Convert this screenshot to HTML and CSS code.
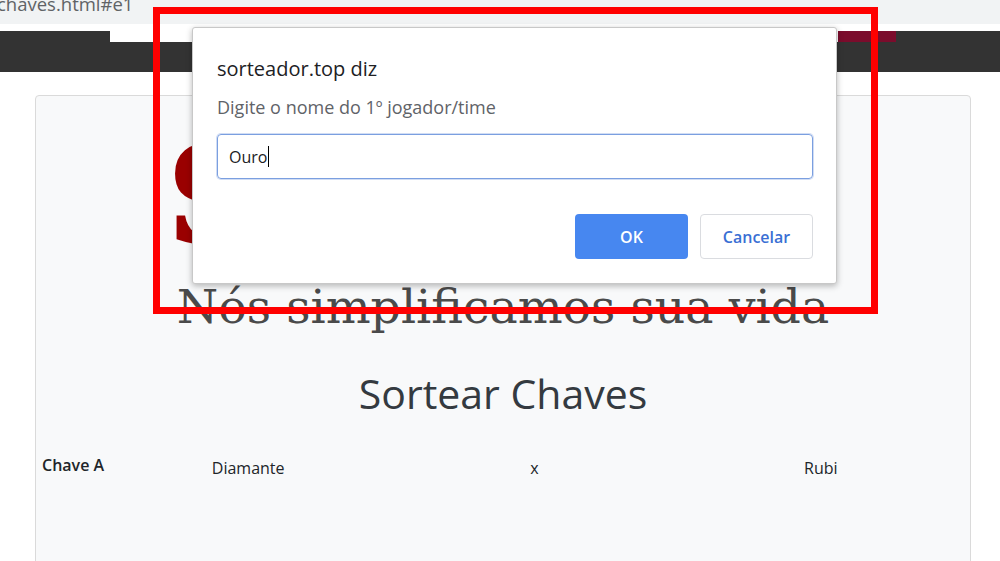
FILE: index.html
```html
<!DOCTYPE html>
<html>
<head>
<meta name="viewport" content="width=device-width, initial-scale=1">
<link rel="stylesheet" href="styles.css">
</head>
<body>

<div class="chrome">
  <span class="url">chaves.html#e1</span>
</div>

<div class="navbar">
  <div class="nav-brand"></div>
  <div class="nav-tab"></div>
  <div class="nav-tab active"></div>
</div>

<div class="card">
  <h1 class="logo">Sorteio</h1>
  <p class="tagline">Nós simplificamos sua vida</p>
  <h2 class="title">Sortear Chaves</h2>

  <div class="keys">
    <div class="key-name">Chave A</div>
    <div class="key-cell">Diamante</div>
    <div class="key-cell">x</div>
    <div class="key-cell">Rubi</div>
  </div>
</div>

<!-- window.prompt() -->
<div class="dialog">
  <div class="dialog-title">sorteador.top diz</div>
  <div class="dialog-msg">Digite o nome do 1º jogador/time</div>
  <div class="dialog-input">Ouro<span class="caret"></span></div>
  <div class="dialog-buttons">
    <button class="btn btn-ok">OK</button>
    <button class="btn btn-cancel">Cancelar</button>
  </div>
</div>

<div class="highlight"></div>

</body>
</html>
```

FILE: styles.css
```css
* {
  box-sizing: border-box;
}

body {
  margin: 0;
  background: #fff;
  font-family: "Open Sans", "Noto Sans", sans-serif;
  color: #212529;
  overflow: hidden;
}

.chrome {
  height: 24px;
  background: #f1f3f4;
  overflow: hidden;
  margin-bottom: 7px;
}

.url {
  display: block;
  margin: -8px 0 0 -3px;
  font-size: 18.5px;
  line-height: 24px;
  color: #606366;
}

.navbar {
  display: flex;
  align-items: flex-start;
  height: 41px;
  background: #333;
}

.nav-brand {
  width: 110px;
}

.nav-tab {
  width: 728px;
  height: 11px;
  background: #fff;
}

.nav-tab.active {
  width: 58px;
  background: #7b0c2c;
}

.card {
  margin: 23px 29px 0 35px;
  min-height: 520px;
  padding: 25px 6px 0 6px;
  border: 1px solid #dadada;
  border-radius: 4px;
  background: #f8f9fa;
  text-align: center;
}

.logo {
  margin: 0 0 0 124px;
  text-align: left;
  font-family: "DejaVu Serif", serif;
  font-weight: bold;
  font-size: 137px;
  line-height: 150px;
  color: #9a0000;
}

.tagline {
  margin: 7px 0 0;
  font-family: "DejaVu Serif", serif;
  font-size: 47.4px;
  line-height: 58px;
  color: #4a4a4a;
}

.title {
  margin: 33px 0 0;
  font-size: 41px;
  font-weight: 500;
  line-height: 48px;
  color: #343a40;
}

.keys {
  display: grid;
  grid-template-columns: 63px 1fr 1fr 1fr;
  margin-top: 40px;
  font-size: 16px;
  line-height: 22px;
}

.key-name {
  text-align: left;
  font-weight: 600;
  margin-top: -3px;
}

/* prompt dialog */
.dialog {
  position: absolute;
  left: 192px;
  top: 27px;
  width: 645px;
  height: 257px;
  padding: 28px 23px 0 24px;
  background: #fff;
  border: 1px solid #c8c8c8;
  border-radius: 3px;
  box-shadow: 0 2px 6px rgba(0, 0, 0, 0.28);
}

.dialog-title {
  font-size: 20px;
  line-height: 26px;
  color: #202124;
}

.dialog-msg {
  margin-top: 13px;
  font-size: 18px;
  line-height: 24px;
  color: #5f6368;
}

.dialog-input {
  display: flex;
  align-items: center;
  height: 45px;
  margin-top: 15px;
  padding: 0 11px;
  border: 1px solid #7b9fe0;
  border-radius: 4px;
  box-shadow: 0 0 0 1px rgba(123, 159, 224, 0.35);
  font-size: 16px;
  line-height: 22px;
  color: #202124;
}

.caret {
  width: 1px;
  height: 21px;
  margin-left: 1px;
  background: #000;
}

.dialog-buttons {
  display: flex;
  justify-content: flex-end;
  gap: 12px;
  margin-top: 35px;
}

.btn {
  width: 113px;
  height: 45px;
  border-radius: 4px;
  font-family: "Open Sans", "Noto Sans", sans-serif;
  font-size: 16px;
  font-weight: 600;
}

.btn-ok {
  border: none;
  background: #4787f0;
  color: #fff;
}

.btn-cancel {
  border: 1px solid #dadce0;
  background: #fff;
  color: #3a6fd4;
}

/* red annotation box */
.highlight {
  position: absolute;
  left: 153px;
  top: 7px;
  width: 725px;
  height: 307px;
  border: 7px solid #ff0000;
}
```
